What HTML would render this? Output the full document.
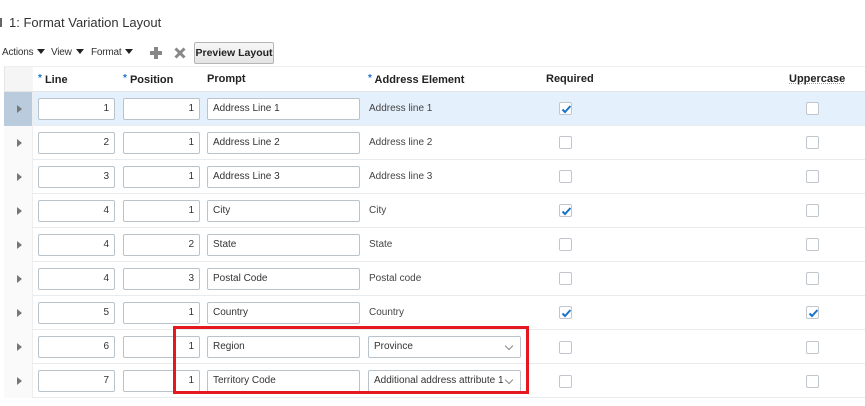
<!DOCTYPE html>
<html><head><meta charset="utf-8"><style>
*{box-sizing:border-box;margin:0;padding:0}
body{width:865px;height:406px;background:#fff;font-family:"Liberation Sans",Arial,sans-serif;color:#333;position:relative;overflow:hidden}
.a{position:absolute}
.title{left:0;top:15px;font-size:13px;color:#333}
.tb{top:47px;font-size:10px;color:#333;letter-spacing:-0.2px}
.tri{display:inline-block;width:0;height:0;border-left:4px solid transparent;border-right:4px solid transparent;border-top:5px solid #222;margin-left:4px;vertical-align:1px}
.btn{left:194px;top:42px;width:80px;height:22px;border:1px solid #b5b5b5;border-radius:2px;background:linear-gradient(#f7f7f7,#e4e4e4);font-size:10.5px;font-weight:bold;text-align:center;line-height:20px;color:#222}
.hdr{top:67px;height:24px;font-size:11px;font-weight:bold;color:#222;line-height:24px}
.star{color:#1a73c8;font-size:10px;vertical-align:2px}
.row{left:4px;width:861px;height:34px;border-bottom:1px solid #e8ecef}
.sel{left:4px;width:29px;height:34px;background:#fafafa;border-right:1px solid #eee}
.arr{width:0;height:0;border-top:4px solid transparent;border-bottom:4px solid transparent;border-left:5px solid #777}
.in{height:22px;border:1px solid #b8c3cc;border-radius:2px;background:#fff;font-size:10px;line-height:20px;padding:0 5px;color:#333;white-space:nowrap}
.r{text-align:right}
.txt{font-size:10px;color:#444}
.cb{width:13px;height:13px;border:1px solid #c0c6cc;border-radius:2px;background:#fff}
.dd::after{content:"";position:absolute;right:8px;top:6px;width:5px;height:5px;border-right:1px solid #888;border-bottom:1px solid #888;transform:rotate(45deg)}
</style></head><body>
<div class="a" style="left:0;top:18px;width:2px;height:9px;background:#666"></div>
<div class="a title" style="left:9px">1: Format Variation Layout</div>
<div class="a tb" style="left:2px">Actions<span class="tri"></span></div>
<div class="a tb" style="left:51px">View<span class="tri"></span></div>
<div class="a tb" style="left:91px">Format<span class="tri"></span></div>
<div class="a" style="left:150px;top:47px;width:12px;height:12px"><div class="a" style="left:0;top:4px;width:12px;height:4px;background:#888"></div><div class="a" style="left:4px;top:0;width:4px;height:12px;background:#888"></div></div>
<svg class="a" style="left:174px;top:47px" width="12" height="12"><path d="M1.5 1.5L10.5 10.5M10.5 1.5L1.5 10.5" stroke="#888" stroke-width="3"/></svg>
<div class="a btn">Preview Layout</div>
<div class="a" style="left:4px;top:66px;width:861px;height:1px;background:#eceff1"></div>
<div class="a" style="left:4px;top:67px;width:29px;height:24px;background:#f5f5f5"></div>
<div class="a" style="left:4px;top:66px;width:1px;height:332px;background:#e3e6e8"></div>
<div class="a hdr" style="left:38px"><span class="star">*</span> Line</div>
<div class="a hdr" style="left:123px"><span class="star">*</span> Position</div>
<div class="a hdr" style="left:207px">Prompt</div>
<div class="a hdr" style="left:368px"><span class="star">*</span> Address Element</div>
<div class="a hdr" style="left:546px">Required</div>
<div class="a hdr" style="left:789px;text-decoration:underline dotted #999">Uppercase</div>
<div class="a" style="left:4px;top:91px;width:861px;height:1px;background:#e3e6e8"></div>

<div class="a row" style="top:92px;background:#e4f0fc"></div><div class="a sel" style="top:92px;background:#b9cbdc"></div>
<div class="a row" style="top:126px"></div><div class="a sel" style="top:126px"></div>
<div class="a row" style="top:160px"></div><div class="a sel" style="top:160px"></div>
<div class="a row" style="top:194px"></div><div class="a sel" style="top:194px"></div>
<div class="a row" style="top:228px"></div><div class="a sel" style="top:228px"></div>
<div class="a row" style="top:262px"></div><div class="a sel" style="top:262px"></div>
<div class="a row" style="top:296px"></div><div class="a sel" style="top:296px"></div>
<div class="a row" style="top:330px"></div><div class="a sel" style="top:330px"></div>
<div class="a row" style="top:364px"></div><div class="a sel" style="top:364px"></div>

<div class="a arr" style="left:17px;top:105px"></div>
<div class="a arr" style="left:17px;top:139px"></div>
<div class="a arr" style="left:17px;top:173px"></div>
<div class="a arr" style="left:17px;top:207px"></div>
<div class="a arr" style="left:17px;top:241px"></div>
<div class="a arr" style="left:17px;top:275px"></div>
<div class="a arr" style="left:17px;top:309px"></div>
<div class="a arr" style="left:17px;top:343px"></div>
<div class="a arr" style="left:17px;top:377px"></div>

<div class="a in r" style="left:38px;top:98px;width:77px">1</div>
<div class="a in r" style="left:38px;top:132px;width:77px">2</div>
<div class="a in r" style="left:38px;top:166px;width:77px">3</div>
<div class="a in r" style="left:38px;top:200px;width:77px">4</div>
<div class="a in r" style="left:38px;top:234px;width:77px">4</div>
<div class="a in r" style="left:38px;top:268px;width:77px">4</div>
<div class="a in r" style="left:38px;top:302px;width:77px">5</div>
<div class="a in r" style="left:38px;top:336px;width:77px">6</div>
<div class="a in r" style="left:38px;top:370px;width:77px">7</div>

<div class="a in r" style="left:123px;top:98px;width:77px">1</div>
<div class="a in r" style="left:123px;top:132px;width:77px">1</div>
<div class="a in r" style="left:123px;top:166px;width:77px">1</div>
<div class="a in r" style="left:123px;top:200px;width:77px">1</div>
<div class="a in r" style="left:123px;top:234px;width:77px">2</div>
<div class="a in r" style="left:123px;top:268px;width:77px">3</div>
<div class="a in r" style="left:123px;top:302px;width:77px">1</div>
<div class="a in r" style="left:123px;top:336px;width:77px">1</div>
<div class="a in r" style="left:123px;top:370px;width:77px">1</div>

<div class="a in" style="left:207px;top:98px;width:153px">Address Line 1</div>
<div class="a in" style="left:207px;top:132px;width:153px">Address Line 2</div>
<div class="a in" style="left:207px;top:166px;width:153px">Address Line 3</div>
<div class="a in" style="left:207px;top:200px;width:153px">City</div>
<div class="a in" style="left:207px;top:234px;width:153px">State</div>
<div class="a in" style="left:207px;top:268px;width:153px">Postal Code</div>
<div class="a in" style="left:207px;top:302px;width:153px">Country</div>
<div class="a in" style="left:207px;top:336px;width:153px">Region</div>
<div class="a in" style="left:207px;top:370px;width:153px">Territory Code</div>

<div class="a txt" style="left:369px;top:103px">Address line 1</div>
<div class="a txt" style="left:369px;top:137px">Address line 2</div>
<div class="a txt" style="left:369px;top:171px">Address line 3</div>
<div class="a txt" style="left:369px;top:205px">City</div>
<div class="a txt" style="left:369px;top:239px">State</div>
<div class="a txt" style="left:369px;top:273px">Postal code</div>
<div class="a txt" style="left:369px;top:307px">Country</div>
<div class="a in dd" style="left:368px;top:336px;width:153px">Province</div>
<div class="a in dd" style="left:368px;top:370px;width:153px">Additional address attribute 1</div>

<svg width="0" height="0" style="position:absolute"><defs><path id="ck" d="M2.5 6.5L5 9L10.5 3" fill="none" stroke="#1a73c8" stroke-width="2"/></defs></svg>
<div class="a cb" style="left:559px;top:102px"><svg width="11" height="11" style="position:absolute;left:0;top:0"><use href="#ck"/></svg></div>
<div class="a cb" style="left:559px;top:136px"></div>
<div class="a cb" style="left:559px;top:170px"></div>
<div class="a cb" style="left:559px;top:204px"><svg width="11" height="11" style="position:absolute;left:0;top:0"><use href="#ck"/></svg></div>
<div class="a cb" style="left:559px;top:238px"></div>
<div class="a cb" style="left:559px;top:272px"></div>
<div class="a cb" style="left:559px;top:306px"><svg width="11" height="11" style="position:absolute;left:0;top:0"><use href="#ck"/></svg></div>
<div class="a cb" style="left:559px;top:341px"></div>
<div class="a cb" style="left:559px;top:375px"></div>
<div class="a cb" style="left:806px;top:102px"></div>
<div class="a cb" style="left:806px;top:136px"></div>
<div class="a cb" style="left:806px;top:170px"></div>
<div class="a cb" style="left:806px;top:204px"></div>
<div class="a cb" style="left:806px;top:238px"></div>
<div class="a cb" style="left:806px;top:272px"></div>
<div class="a cb" style="left:806px;top:306px"><svg width="11" height="11" style="position:absolute;left:0;top:0"><use href="#ck"/></svg></div>
<div class="a cb" style="left:806px;top:341px"></div>
<div class="a cb" style="left:806px;top:375px"></div>

<div class="a" style="left:173px;top:326px;width:356px;height:68px;border:3px solid #e3191f"></div>
</body></html>
